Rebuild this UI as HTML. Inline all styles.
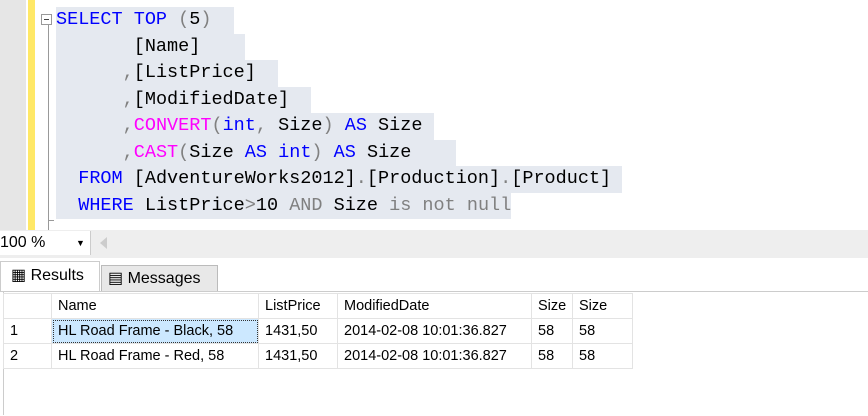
<!DOCTYPE html>
<html><head><style>
body{margin:0;width:868px;height:415px;overflow:hidden;background:#fff;font-family:"Liberation Sans",sans-serif;position:relative}
.abs{position:absolute}
.code{font-family:"Liberation Mono",monospace;font-size:18.5px;white-space:pre;line-height:26.5px;height:26.5px;color:#000}
.sel{background:#e5e9f0;display:inline-block;height:26.5px}
.k{color:#0000ff}.f{color:#ff00ff}.g{color:#808080}
table{border-collapse:collapse;font-size:14.5px}
td{border:1px solid #e3e3e3;height:24px;padding:0 0 0 6px;white-space:nowrap}
</style></head><body>
<div class="abs" style="left:0;top:0;width:26px;height:230px;background:#e6e6e6"></div>
<div class="abs" style="left:28px;top:0;width:7px;height:230px;background:#ffe866"></div>
<div class="abs" style="left:41px;top:14px;width:9px;height:9px;border:1px solid #999;background:#fff"></div>
<div class="abs" style="left:44px;top:19px;width:5px;height:1px;background:#444"></div>
<div class="abs" style="left:48px;top:25px;width:1px;height:205px;background:#999"></div>
<div class="abs" style="left:48px;top:220px;width:6px;height:1px;background:#999"></div>
<div class="abs" style="left:56px;top:7px">
<div class="code"><span class="sel"><span class="k">SELECT TOP </span><span class="g">(</span>5<span class="g">)</span>  </span></div>
<div class="code"><span class="sel">       [Name]    </span></div>
<div class="code"><span class="sel">      <span class="g">,</span>[ListPrice]  </span></div>
<div class="code"><span class="sel">      <span class="g">,</span>[ModifiedDate]  </span></div>
<div class="code"><span class="sel">      <span class="g">,</span><span class="f">CONVERT</span><span class="g">(</span><span class="k">int</span><span class="g">,</span> Size<span class="g">)</span> <span class="k">AS</span> Size </span></div>
<div class="code"><span class="sel">      <span class="g">,</span><span class="f">CAST</span><span class="g">(</span>Size <span class="k">AS</span> <span class="k">int</span><span class="g">)</span> <span class="k">AS</span> Size    </span></div>
<div class="code"><span class="sel">  <span class="k">FROM</span> [AdventureWorks2012]<span class="g">.</span>[Production]<span class="g">.</span>[Product] </span></div>
<div class="code"><span class="sel">  <span class="k">WHERE</span> ListPrice<span class="g">&gt;</span>10 <span class="g">AND</span> Size <span class="g">is not null</span></span></div>
</div>
<div class="abs" style="left:0;top:230px;width:868px;height:28px;background:#eeeeee"></div>
<div class="abs" style="left:0;top:231px;width:90px;height:24px;background:#fff;border-right:1px solid #ccc;font-size:16px;line-height:24px">100 %<span style="position:absolute;left:76px;font-size:9px">▼</span></div>
<div class="abs" style="left:100px;top:237px;width:0;height:0;border-top:6px solid transparent;border-bottom:6px solid transparent;border-right:7px solid #ccc"></div>
<div class="abs" style="left:0;top:258px;width:868px;height:34px;background:#fff"></div>
<div class="abs" style="left:0;top:261px;width:100px;height:31px;background:#fff;border:1px solid #ccc;border-bottom:none;font-size:16px;line-height:28px;box-sizing:border-box;padding-left:10px">▦ Results</div>
<div class="abs" style="left:101px;top:265px;width:117px;height:26px;background:#e8e8e8;border:1px solid #bbb;border-bottom:none;font-size:16px;line-height:26px;box-sizing:border-box;padding-left:6px">▤ Messages</div>
<div class="abs" style="left:0;top:291px;width:868px;height:124px;background:#fff;border-top:1px solid #ccc"></div>
<div class="abs" style="left:3px;top:292px;width:1px;height:123px;background:#ccc"></div>
<table class="abs" style="left:3px;top:293px">
<tr><td style="width:41px"></td><td style="width:200px">Name</td><td style="width:72px">ListPrice</td><td style="width:187px">ModifiedDate</td><td style="width:34px">Size</td><td style="width:53px">Size</td></tr>
<tr><td>1</td><td style="background:#cce8ff;outline:1px dotted #333;outline-offset:-2px">HL Road Frame - Black, 58</td><td>1431,50</td><td>2014-02-08 10:01:36.827</td><td>58</td><td>58</td></tr>
<tr><td>2</td><td>HL Road Frame - Red, 58</td><td>1431,50</td><td>2014-02-08 10:01:36.827</td><td>58</td><td>58</td></tr>
</table>
</body></html>
